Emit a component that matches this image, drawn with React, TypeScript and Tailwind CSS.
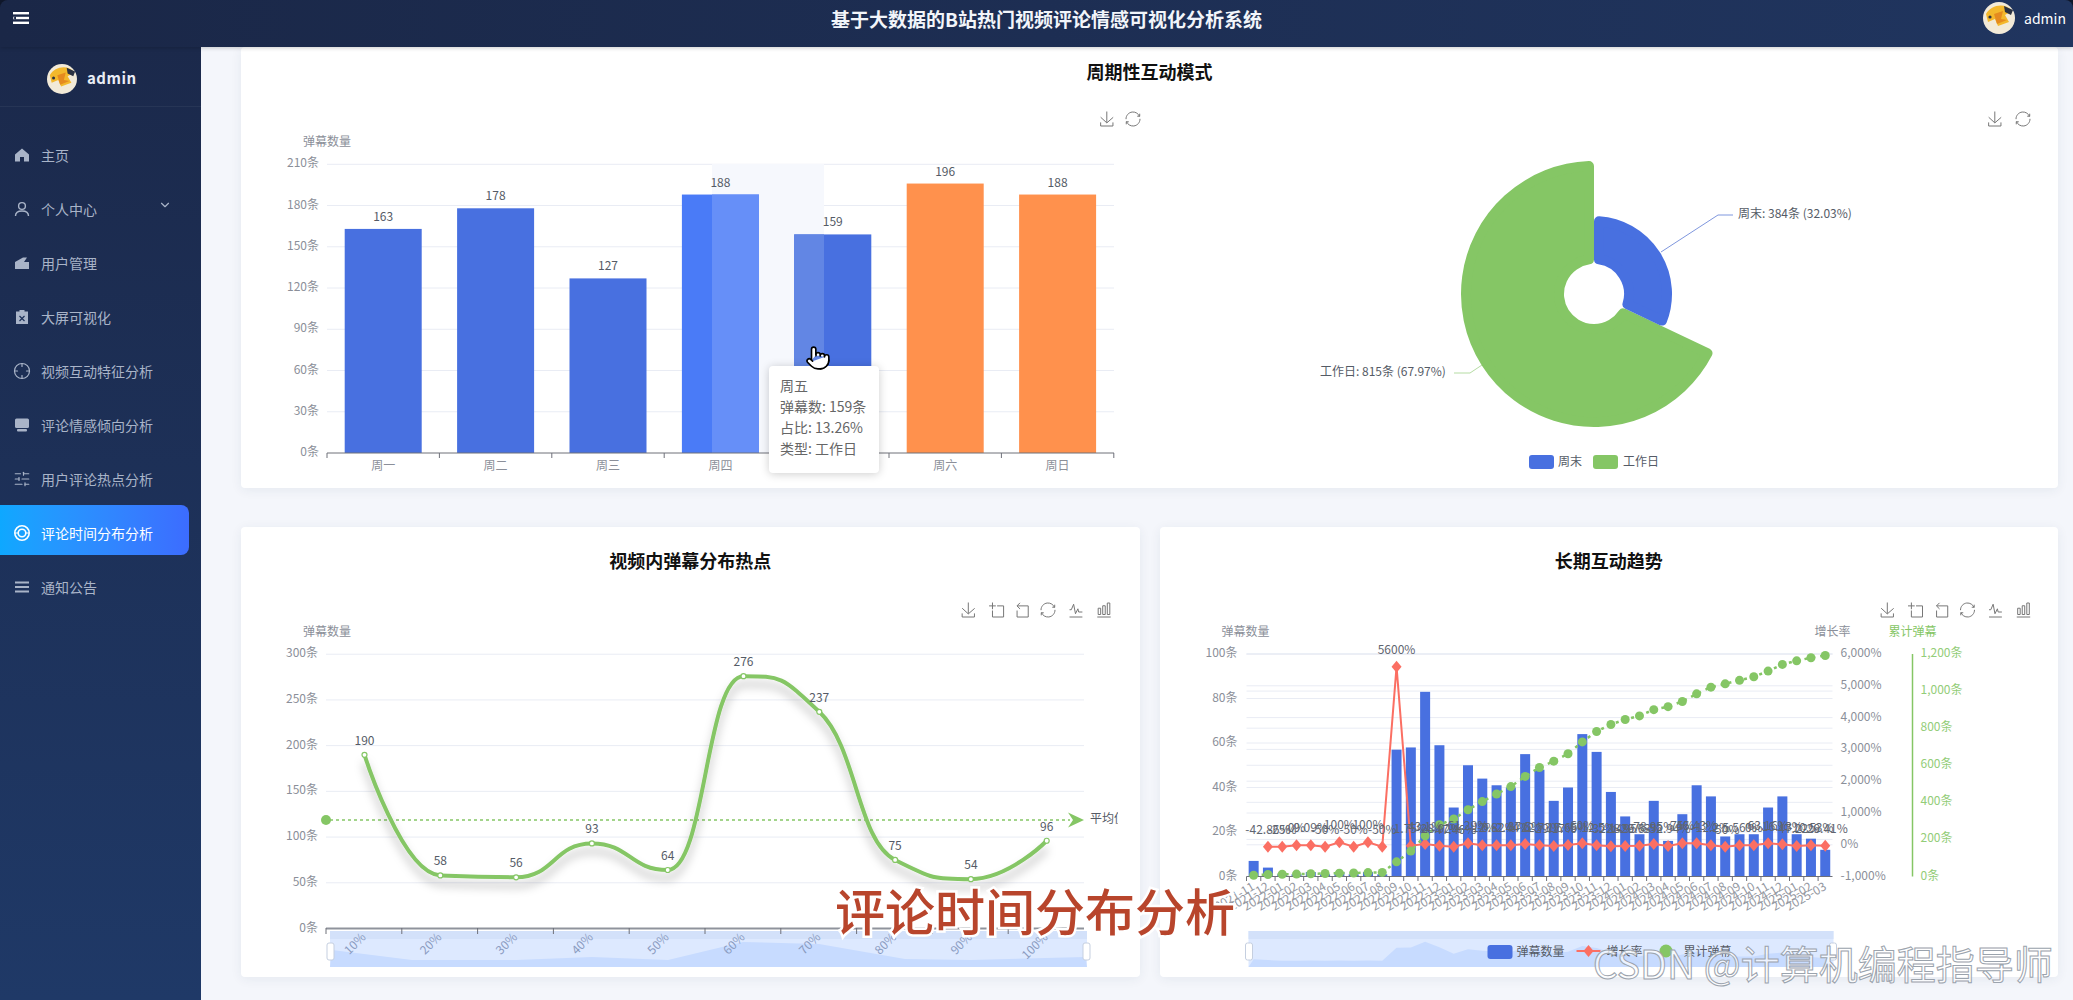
import { ChevronDown, Crosshair, Pointer, SlidersHorizontal } from "lucide-react";

const GRID = "#e9ecf4";
const LABEL = "#8b8f99";
const DARK = "#555b66";
const BLUE = "#4870e0";
const GREEN = "#85c665";
const RED = "#fb6f63";

const TOOL = {
  save: "M4.7,22.9L29.3,45.5L54.7,23.4M4.6,43.6L4.6,58L53.8,58L53.8,43.6M29.2,45.1L29.2,0",
  zoom: "M0,13.5h26.9 M13.5,26.9V0 M32.1,13.5H58V58H13.5 V32.1",
  back: "M22,1.4L9.9,13.5l12.3,12.3 M10.3,13.5H54.9v44.6 H10.3v-26",
  restore:
    "M3.8,33.4 M47,18.9h9.8V8.7 M56.3,20.1 C52.1,9,40.5,0.6,26.8,2.1C12.6,3.7,1.6,16.2,2.1,30.6 M13,41.1H3.1v10.2 M3.7,39.9c4.2,11.1,15.8,19.5,29.5,18 c14.2-1.6,25.2-14.1,24.7-28.5",
  line: "M4.1,28.9h7.1l9.3-22l7.4,38l9.7-19.7l3,12.8h14.9M4.1,58h51.4",
  bar: "M6.7,22.9h10V48h-10V22.9zM24.9,13h10v35h-10V13zM43.2,2h10v46h-10V2zM3.1,58h53.7",
};

function Tool({ x, y, d }: { x: number; y: number; d: string }) {
  return (
    <path
      d={d}
      transform={`translate(${x - 7.5} ${y - 7.5}) scale(0.25)`}
      fill="none"
      stroke="#777"
      strokeWidth={4}
    />
  );
}

function Avatar({ size }: { size: number }) {
  return (
    <svg width={size} height={size} viewBox="0 0 32 32" className="shrink-0">
      <circle cx="16" cy="16" r="16" fill="#f2ead8" />
      <path d="M3 12 C8 3 22 0 29 9 L22 13 L26 20 L15 24 L12 17 L5 20 Z" fill="#f3b82c" />
      <path d="M11 12 L20 9 L18 17 L24 18 L14 22 Z" fill="#e58a1f" />
      <path d="M21 4 L30 8 L28 13 L22 10 Z" fill="#2b3242" />
      <circle cx="7" cy="15" r="1.6" fill="#2b3242" />
    </svg>
  );
}

const svgIcon = "w-[18px] h-[18px] shrink-0";

const menu = [
  {
    label: "主页",
    icon: (
      <svg viewBox="0 0 18 18" className={svgIcon} fill="currentColor">
        <path d="M9 2.5 L16 8.5 V15.5 H11 V11 H7 V15.5 H2 V8.5 Z" />
      </svg>
    ),
  },
  {
    label: "个人中心",
    icon: (
      <svg viewBox="0 0 18 18" className={svgIcon} fill="none" stroke="currentColor" strokeWidth="1.4">
        <circle cx="9" cy="6" r="3.4" />
        <path d="M2.5 16 C2.5 12 5.5 11 9 11 C12.5 11 15.5 12 15.5 16" />
      </svg>
    ),
  },
  {
    label: "用户管理",
    icon: (
      <svg viewBox="0 0 18 18" className={svgIcon} fill="currentColor">
        <path d="M2 8 L10 3.5 L14 3.5 L11 8 H16 V15 H2 Z" />
      </svg>
    ),
  },
  {
    label: "大屏可视化",
    icon: (
      <svg viewBox="0 0 18 18" className={svgIcon}>
        <path d="M3 3.5 H6.5 V2 H11.5 V3.5 H15 V16 H3 Z" fill="currentColor" />
        <path d="M6.5 8 L11.5 13 M11.5 8 L6.5 13" stroke="#1d3159" strokeWidth="1.2" />
      </svg>
    ),
  },
  { label: "视频互动特征分析", icon: <Crosshair size={18} strokeWidth={1.6} className="shrink-0" /> },
  {
    label: "评论情感倾向分析",
    icon: (
      <svg viewBox="0 0 18 18" className={svgIcon} fill="currentColor">
        <rect x="2" y="2.5" width="14" height="9.5" rx="1.5" />
        <rect x="4" y="13" width="10" height="2.5" rx="1" />
      </svg>
    ),
  },
  { label: "用户评论热点分析", icon: <SlidersHorizontal size={18} strokeWidth={1.6} className="shrink-0" /> },
  {
    label: "评论时间分布分析",
    active: true,
    icon: (
      <svg viewBox="0 0 18 18" className={svgIcon} fill="none" stroke="currentColor">
        <circle cx="9" cy="9" r="7.2" strokeWidth="1.6" />
        <circle cx="9" cy="9" r="3.8" strokeWidth="1.6" />
        <path d="M2 9 H5 M13 9 H16" strokeWidth="1.2" />
      </svg>
    ),
  },
  {
    label: "通知公告",
    icon: (
      <svg viewBox="0 0 18 18" className={svgIcon} fill="currentColor">
        <rect x="2" y="3.5" width="14" height="2" />
        <rect x="2" y="8" width="14" height="2" />
        <rect x="2" y="12.5" width="14" height="2" />
      </svg>
    ),
  },
];

function Sidebar() {
  return (
    <aside className="w-[201px] shrink-0 bg-linear-to-b from-[#1b294b] to-[#1f3967]">
      <div className="flex h-[60px] items-center gap-[10px] border-b border-white/5 pl-[47px] pt-[4px]">
        <Avatar size={30} />
        <span className="text-[15px] font-semibold tracking-[0.5px] text-[#e8edf5]">admin</span>
      </div>
      <nav className="flex flex-col gap-[4px] pt-[20px]">
        {menu.map((m) => (
          <div
            key={m.label}
            className={
              m.active
                ? "flex h-[50px] w-[189px] items-center gap-[10px] rounded-r-[8px] bg-linear-to-r from-[#0ea8ff] to-[#3c6cff] pl-[13px] pt-[6px] text-[14px] text-white"
                : "flex h-[50px] w-[189px] items-center gap-[10px] pl-[13px] pt-[6px] text-[14px] text-[#a9b4c8]"
            }
          >
            {m.icon}
            <span>{m.label}</span>
            {m.label === "个人中心" && (
              <ChevronDown size={14} className="ml-[51px] -mt-[8px]" />
            )}
          </div>
        ))}
      </nav>
    </aside>
  );
}

function Slider({
  x0,
  x1,
  points,
  handleRight,
}: {
  x0: number;
  x1: number;
  points: [number, number][];
  handleRight: number;
}) {
  const area = `${x0},967 ${points.map((p) => p.join(",")).join(" ")} ${x1},967`;
  return (
    <g>
      <rect x={x0} y={931} width={x1 - x0} height={36} fill="#dde9ff" />
      <rect x={x0} y={931} width={x1 - x0} height={8} fill="#d3e1fa" />
      <polygon points={area} fill="#c7dbff" />
      <rect x={x0 - 3} y={943} width={7} height={17} rx={2} fill="#fff" stroke="#c5cfe0" />
      <rect x={handleRight - 3} y={943} width={7} height={17} rx={2} fill="#fff" stroke="#c5cfe0" />
    </g>
  );
}

/* 周期性互动模式 */
const weekData = [
  ["周一", 163],
  ["周二", 178],
  ["周三", 127],
  ["周四", 188],
  ["周五", 159],
  ["周六", 196],
  ["周日", 188],
] as const;

function polar(r: number, deg: number) {
  const a = (deg * Math.PI) / 180;
  return `${1594 + r * Math.sin(a)} ${294 - r * Math.cos(a)}`;
}

function sector(r0: number, r1: number, a0: number, a1: number) {
  const ins = 5;
  const R = r1 - ins;
  const r = r0 + ins;
  const dO = ((ins / R) * 180) / Math.PI;
  const dI = ((ins / r) * 180) / Math.PI;
  const large = a1 - a0 > 180 ? 1 : 0;
  return `M${polar(r, a0 + dI)} L${polar(R, a0 + dO)} A${R} ${R} 0 ${large} 1 ${polar(R, a1 - dO)} L${polar(r, a1 - dI)} A${r} ${r} 0 ${large} 0 ${polar(r, a0 + dI)} Z`;
}

function WeekCharts() {
  const by = (v: number) => 453 - (v / 210) * 288.7;
  return (
    <svg viewBox="241 99 1817 389" className="block w-full flex-1">
      <text x={327} y={146} fontSize={12} fill={LABEL} textAnchor="middle">
        弹幕数量
      </text>
      {[0, 30, 60, 90, 120, 150, 180, 210].map((v) => (
        <g key={v}>
          {v > 0 && <line x1={327} x2={1114} y1={by(v)} y2={by(v)} stroke={GRID} />}
          <text x={319} y={by(v) + 3} fontSize={12} fill={LABEL} textAnchor="end">
            {v}条
          </text>
        </g>
      ))}
      <rect x={712} y={164} width={112} height={289} fill="#f6f8fd" />
      {weekData.map(([name, v], i) => {
        const cx = 383.2 + i * 112.4;
        const fill = i >= 5 ? "#ff914d" : i === 3 ? "#4a7bf7" : BLUE;
        return (
          <g key={name}>
            <rect x={cx - 38.5} y={by(v)} width={77} height={453 - by(v)} fill={fill} />
            <text x={cx} y={by(v) - 8} fontSize={12} fill={DARK} textAnchor="middle">
              {v}
            </text>
            <text x={cx} y={470} fontSize={12} fill={LABEL} textAnchor="middle">
              {name}
            </text>
          </g>
        );
      })}
      <rect x={712} y={by(188)} width={47} height={453 - by(188)} fill="#668ff8" />
      <rect x={794} y={by(159)} width={30} height={453 - by(159)} fill="#6286e4" />
      <line x1={327} x2={1114} y1={453} y2={453} stroke="#6e7079" />
      {[0, 1, 2, 3, 4, 5, 6, 7].map((i) => (
        <line key={i} x1={327 + i * 112.4} x2={327 + i * 112.4} y1={453} y2={458} stroke="#6e7079" />
      ))}
      <Tool x={1107} y={119} d={TOOL.save} />
      <Tool x={1133} y={119} d={TOOL.restore} />

      <Tool x={1995} y={119} d={TOOL.save} />
      <Tool x={2023} y={119} d={TOOL.restore} />
      <path d={sector(30, 133, 115.3, 360)} fill={GREEN} stroke={GREEN} strokeWidth={10} strokeLinejoin="round" />
      <path d={sector(30, 78, 0, 115.3)} fill={BLUE} stroke={BLUE} strokeWidth={10} strokeLinejoin="round" />
      <polyline points="1661,252 1718,215 1733,215" fill="none" stroke="#7f97de" />
      <polyline points="1482,365 1470,373 1454,373" fill="none" stroke="#b5dca3" />
      <text x={1738} y={218} fontSize={12} fill={DARK}>
        周末: 384条 (32.03%)
      </text>
      <text x={1320} y={376} fontSize={12} fill={DARK}>
        工作日: 815条 (67.97%)
      </text>
      <rect x={1529} y={455} width={25} height={14} rx={3} fill={BLUE} />
      <text x={1558} y={466} fontSize={12} fill={DARK}>
        周末
      </text>
      <rect x={1593} y={455} width={25} height={14} rx={3} fill={GREEN} />
      <text x={1623} y={466} fontSize={12} fill={DARK}>
        工作日
      </text>
    </svg>
  );
}

/* 视频内弹幕分布热点 */
const heat = [190, 58, 56, 93, 64, 276, 237, 75, 54, 96];

function smoothPath(pts: [number, number][]) {
  // control offset along y, clamped so a segment never overshoots its neighbours
  const offset = (i: number) => {
    const a = pts[i][1] - pts[i - 1][1];
    const b = pts[i + 1][1] - pts[i][1];
    if (a * b <= 0) return 0;
    const m = ((pts[i + 1][1] - pts[i - 1][1]) / (pts[i + 1][0] - pts[i - 1][0])) * (pts[i + 1][0] - pts[i][0]) * 0.5;
    const lim = Math.min(Math.abs(a), Math.abs(b));
    return Math.sign(m) * Math.min(Math.abs(m), lim);
  };
  const last = pts.length - 1;
  let d = `M${pts[0][0]} ${pts[0][1]}`;
  for (let i = 0; i < last; i++) {
    const [x0, y0] = pts[i];
    const [x1, y1] = pts[i + 1];
    const h = (x1 - x0) * 0.5;
    const c1 = i === 0 ? `${x0} ${y0}` : `${x0 + h} ${y0 + offset(i)}`;
    const c2 = i + 1 === last ? `${x1} ${y1}` : `${x1 - h} ${y1 - offset(i + 1)}`;
    d += ` C${c1} ${c2} ${x1} ${y1}`;
  }
  return d;
}

function HeatChart() {
  const hy = (v: number) => 928.5 - v * 0.9143;
  const pts = heat.map((v, i) => [364.5 + i * 75.8, hy(v)] as [number, number]);
  const thumb: [number, number][] = [
    [332, 950],
    [412, 960],
    [516, 960],
    [592, 957],
    [668, 960],
    [743, 942],
    [819, 944],
    [905, 959],
    [971, 960],
    [1085, 957],
  ];
  return (
    <svg viewBox="241 597 898.5 380" className="block w-full flex-1">
      <defs>
        <filter id="lineShadow" x="-10%" y="-10%" width="120%" height="130%">
          <feDropShadow dx="0" dy="8" stdDeviation="5" floodColor="#000" floodOpacity="0.28" />
        </filter>
        <clipPath id="avgClip">
          <rect x={1085} y={800} width={33} height={40} />
        </clipPath>
      </defs>
      {[968.5, 996.6, 1022, 1048, 1076, 1104].map((x, i) => (
        <Tool
          key={x}
          x={x}
          y={610}
          d={[TOOL.save, TOOL.zoom, TOOL.back, TOOL.restore, TOOL.line, TOOL.bar][i]}
        />
      ))}
      <text x={327} y={636} fontSize={12} fill={LABEL} textAnchor="middle">
        弹幕数量
      </text>
      {[0, 50, 100, 150, 200, 250, 300].map((v) => (
        <g key={v}>
          {v > 0 && <line x1={326} x2={1084} y1={hy(v)} y2={hy(v)} stroke={GRID} />}
          <text x={318} y={hy(v) + 3} fontSize={12} fill={LABEL} textAnchor="end">
            {v}条
          </text>
        </g>
      ))}
      <Slider x0={330} x1={1087} points={thumb} handleRight={1086} />
      <line x1={326} x2={1084} y1={928.5} y2={928.5} stroke="#8f939c" strokeWidth={2} />
      {heat.map((_, i) => (
        <line key={i} x1={326 + i * 75.8} x2={326 + i * 75.8} y1={928} y2={934} stroke="#6e7079" />
      ))}
      {heat.map((_, i) => {
        const x = 364.5 + i * 75.8;
        return (
          <text
            key={i}
            x={x + 2}
            y={938}
            fontSize={12}
            fill="#8a9bbf"
            textAnchor="end"
            transform={`rotate(-45 ${x + 2} 938)`}
          >
            {(i + 1) * 10}%
          </text>
        );
      })}
      <line x1={330} x2={1070} y1={820} y2={820} stroke={GREEN} strokeWidth={1.5} strokeDasharray="3 3" />
      <circle cx={326} cy={820} r={5} fill={GREEN} />
      <path d="M1084 820 L1068 812.5 L1073 820 L1068 827.5 Z" fill={GREEN} />
      <text x={1090} y={823} fontSize={12} fill={DARK} clipPath="url(#avgClip)">
        平均值
      </text>
      <path d={smoothPath(pts)} fill="none" stroke={GREEN} strokeWidth={4} filter="url(#lineShadow)" />
      {pts.map(([x, y], i) => (
        <g key={i}>
          <circle cx={x} cy={y} r={2.5} fill="#fff" stroke={GREEN} strokeWidth={1.2} />
          <text x={x} y={y - 10} fontSize={12} fill={DARK} textAnchor="middle">
            {heat[i]}
          </text>
        </g>
      ))}
    </svg>
  );
}

/* 长期互动趋势 */
const bars = [
  7, 4, 1, 1, 2, 1, 2, 1, 2, 1, 57, 58, 83, 59, 31, 50, 44, 41, 40, 55, 48, 34, 40, 64, 56, 38, 27, 19, 34, 16, 28, 41,
  36, 18, 19, 19, 31, 36, 19, 17, 12,
];
const growthY = [
  0, 800, 800, 796, 796, 800, 787, 800, 787, 800, 260, 797, 792, 797, 800, 790, 796, 796, 796, 792, 796, 798, 795, 790,
  796, 799, 798, 797, 792, 798, 790, 790, 796, 800, 796, 796, 790, 793, 798, 796, 797,
];
const growthText = [
  "", "-42.86%", "-25%", "0%", "9.09%", "-50%", "100%", "-50%", "100%", "-50%", "5600%", "1.75%", "43.1%", "-28.92%",
  "-47.46%", "61.29%", "-12%", "-6.82%", "-2.44%", "37.5%", "-12.73%", "-29.17%", "17.65%", "60%", "-12.5%", "-32.14%",
  "-28.95%", "-29.63%", "78.95%", "-52.94%", "75%", "46.43%", "-12.2%", "-50%", "5.56%", "0%", "63.16%", "16.13%",
  "-47.22%", "-10.53%", "-29.41%",
];

function months() {
  const out: string[] = [];
  let y = 2021;
  let m = 11;
  for (let i = 0; i < 41; i++) {
    out.push(`${y}-${String(m).padStart(2, "0")}`);
    m++;
    if (m > 12) {
      m = 1;
      y++;
    }
  }
  return out;
}

function TrendChart() {
  const cx = (i: number) => 1246 + 14.29 * (i + 0.5);
  const ly = (v: number) => 876.5 - v * 2.225;
  const ry = (i: number) => 654 + i * 31.8;
  const cy = (v: number) => 876.5 - (v / 1200) * 222.5;
  let sum = 0;
  const greenPts = bars.map((v, i) => {
    sum += v;
    return [cx(i), cy(sum)] as [number, number];
  });
  const redPts = growthY.map((y, i) => [cx(i), 580 + y / 3] as [number, number]).slice(1);
  const thumb = bars.map((v, i) => [cx(i), 961 - v * 0.233] as [number, number]);
  const rightLabels = ["6,000%", "5,000%", "4,000%", "3,000%", "2,000%", "1,000%", "0%", "-1,000%"];
  return (
    <svg viewBox="1159.5 597 898.5 380" className="block w-full flex-1">
      {[1887, 1915, 1941, 1967, 1995, 2023].map((x, i) => (
        <Tool
          key={x}
          x={x}
          y={610}
          d={[TOOL.save, TOOL.zoom, TOOL.back, TOOL.restore, TOOL.line, TOOL.bar][i]}
        />
      ))}
      <text x={1245} y={636} fontSize={12} fill={LABEL} textAnchor="middle">
        弹幕数量
      </text>
      <text x={1832} y={636} fontSize={12} fill={LABEL} textAnchor="middle">
        增长率
      </text>
      <text x={1912} y={636} fontSize={12} fill={GREEN} textAnchor="middle">
        累计弹幕
      </text>
      {[20, 40, 60, 80, 100].map((v) => (
        <line key={v} x1={1246} x2={1832} y1={ly(v)} y2={ly(v)} stroke={GRID} />
      ))}
      {rightLabels.slice(0, 7).map((t, i) => (
        <line key={t} x1={1246} x2={1832} y1={ry(i)} y2={ry(i)} stroke={GRID} />
      ))}
      {[200, 400, 600, 800, 1000, 1200].map((v) => (
        <line key={v} x1={1246} x2={1832} y1={cy(v)} y2={cy(v)} stroke={GRID} />
      ))}
      {[0, 20, 40, 60, 80, 100].map((v) => (
        <text key={v} x={1237} y={ly(v) + 3} fontSize={12} fill={LABEL} textAnchor="end">
          {v}条
        </text>
      ))}
      {rightLabels.map((t, i) => (
        <text key={t} x={1840} y={ry(i) + 3} fontSize={12} fill={LABEL}>
          {t}
        </text>
      ))}
      {[0, 200, 400, 600, 800, 1000, 1200].map((v) => (
        <text key={v} x={1920} y={cy(v) + 3} fontSize={12} fill="#93cd78">
          {v.toLocaleString("en-US")}条
        </text>
      ))}
      <line x1={1912} x2={1912} y1={654} y2={876.5} stroke={GREEN} strokeWidth={1.5} />
      {bars.map((v, i) => (
        <rect key={i} x={cx(i) - 5} y={ly(v)} width={10} height={876.5 - ly(v)} fill={BLUE} />
      ))}
      <line x1={1246} x2={1832} y1={876.5} y2={876.5} stroke="#6e7079" />
      {bars.map((_, i) => (
        <line key={i} x1={1246 + i * 14.29} x2={1246 + i * 14.29} y1={876.5} y2={881} stroke="#6e7079" />
      ))}
      {months().map((t, i) => (
        <text
          key={t}
          x={cx(i) + 2}
          y={889}
          fontSize={12}
          fill="#93979f"
          textAnchor="end"
          transform={`rotate(-30 ${cx(i) + 2} 889)`}
        >
          {t}
        </text>
      ))}
      <Slider x0={1248} x1={1833} points={thumb} handleRight={1832} />
      <polyline
        points={redPts.map((p) => p.join(",")).join(" ")}
        fill="none"
        stroke={RED}
        strokeWidth={2}
      />
      {redPts.map(([x, y], i) => (
        <path key={i} d={`M${x} ${y - 6} L${x + 5} ${y} L${x} ${y + 6} L${x - 5} ${y} Z`} fill={RED} />
      ))}
      <polyline
        points={greenPts.map((p) => p.join(",")).join(" ")}
        fill="none"
        stroke={GREEN}
        strokeWidth={2.5}
        strokeDasharray="3 5"
      />
      {greenPts.map(([x, y], i) => (
        <circle key={i} cx={x} cy={y} r={4.5} fill={GREEN} />
      ))}
      {redPts.map(([x, y], i) => (
        <text key={i} x={x} y={y - 13} fontSize={12} fill="#5f6570" textAnchor="middle">
          {growthText[i + 1]}
        </text>
      ))}
      <rect x={1487} y={945} width={25} height={14} rx={3} fill={BLUE} />
      <text x={1516} y={956} fontSize={12} fill={DARK}>
        弹幕数量
      </text>
      <line x1={1576} x2={1600} y1={951} y2={951} stroke={RED} strokeWidth={2} />
      <path d="M1588 945 L1593 951 L1588 957 L1583 951 Z" fill={RED} />
      <text x={1606} y={956} fontSize={12} fill={DARK}>
        增长率
      </text>
      <circle cx={1665.5} cy={951} r={6.5} fill={GREEN} />
      <text x={1683} y={956} fontSize={12} fill={DARK}>
        累计弹幕
      </text>
    </svg>
  );
}

function Card({ title, titleH, children }: { title: string; titleH: string; children: React.ReactNode }) {
  return (
    <section className="flex flex-col rounded-[4px] bg-white shadow-[0_2px_12px_rgba(30,50,90,0.07)]">
      <h2 className={`flex shrink-0 items-center justify-center text-[18px] font-bold text-[#111] ${titleH}`}>
        {title}
      </h2>
      {children}
    </section>
  );
}

export default function App() {
  return (
    <div className="relative flex h-screen w-full flex-col overflow-hidden bg-[#10182c] font-['Noto_Sans_CJK_SC','Noto_Sans',sans-serif]">
      <header className="z-10 flex h-[47px] shrink-0 items-start rounded-t-[8px] bg-linear-to-r from-[#1a2747] to-[#20355f] shadow-[0_1px_4px_rgba(0,0,0,0.2)]">
        <div className="flex h-[36px] w-[100px] items-center pl-[13px]">
          <svg viewBox="0 0 16 12" className="h-[12px] w-[16px]" fill="#fff">
            <rect width="16" height="2.4" />
            <rect y="4.8" width="16" height="2.4" />
            <rect y="9.6" width="16" height="2.4" />
            <path d="M0 6 L3 4.2 V7.8 Z" fill="#1a2747" />
          </svg>
        </div>
        <h1 className="flex-1 pl-[10px] pt-[5px] text-center text-[19px] font-bold text-[#f2f5fa]">
          基于大数据的B站热门视频评论情感可视化分析系统
        </h1>
        <div className="flex h-[36px] w-[90px] items-center gap-[9px] pr-[6px]">
          <Avatar size={32} />
          <span className="text-[14px] text-white">admin</span>
        </div>
      </header>

      <div className="flex min-h-0 flex-1">
        <Sidebar />
        <main className="flex flex-1 flex-col gap-[39px] bg-[#f4f6fb] pl-[40px] pr-[15px]">
          <div className="relative flex h-[441px] flex-col">
            <Card title="周期性互动模式" titleH="h-[52px] pb-[3px]">
              <WeekCharts />
            </Card>
            <div className="absolute left-[528px] top-[319px] h-[107px] w-[110px] rounded-[4px] bg-white px-[11px] pt-[9px] text-[14px] leading-[21px] text-[#666] shadow-[0_1px_10px_rgba(0,0,0,0.2)]">
              <div>周五</div>
              <div>弹幕数: 159条</div>
              <div>占比: 13.26%</div>
              <div>类型: 工作日</div>
            </div>
            <Pointer
              size={26}
              fill="#fff"
              strokeWidth={1.5}
              className="absolute left-[564px] top-[298px] text-black"
            />
          </div>
          <div className="grid h-[450px] grid-cols-2 gap-[20px]">
            <Card title="视频内弹幕分布热点" titleH="h-[70px] pb-[4px]">
              <HeatChart />
            </Card>
            <Card title="长期互动趋势" titleH="h-[70px] pb-[4px]">
              <TrendChart />
            </Card>
          </div>
        </main>
      </div>

      <div className="absolute left-[835px] top-[884px] text-[50px] leading-none font-medium text-[#b8452c] [-webkit-text-stroke:5px_#fff] [paint-order:stroke_fill]">
        评论时间分布分析
      </div>
      <div className="absolute left-[1593px] top-[938px] text-[39px] leading-tight whitespace-nowrap text-white/70 [-webkit-text-stroke:1px_#9ba3ad]">
        CSDN @计算机编程指导师
      </div>
    </div>
  );
}
